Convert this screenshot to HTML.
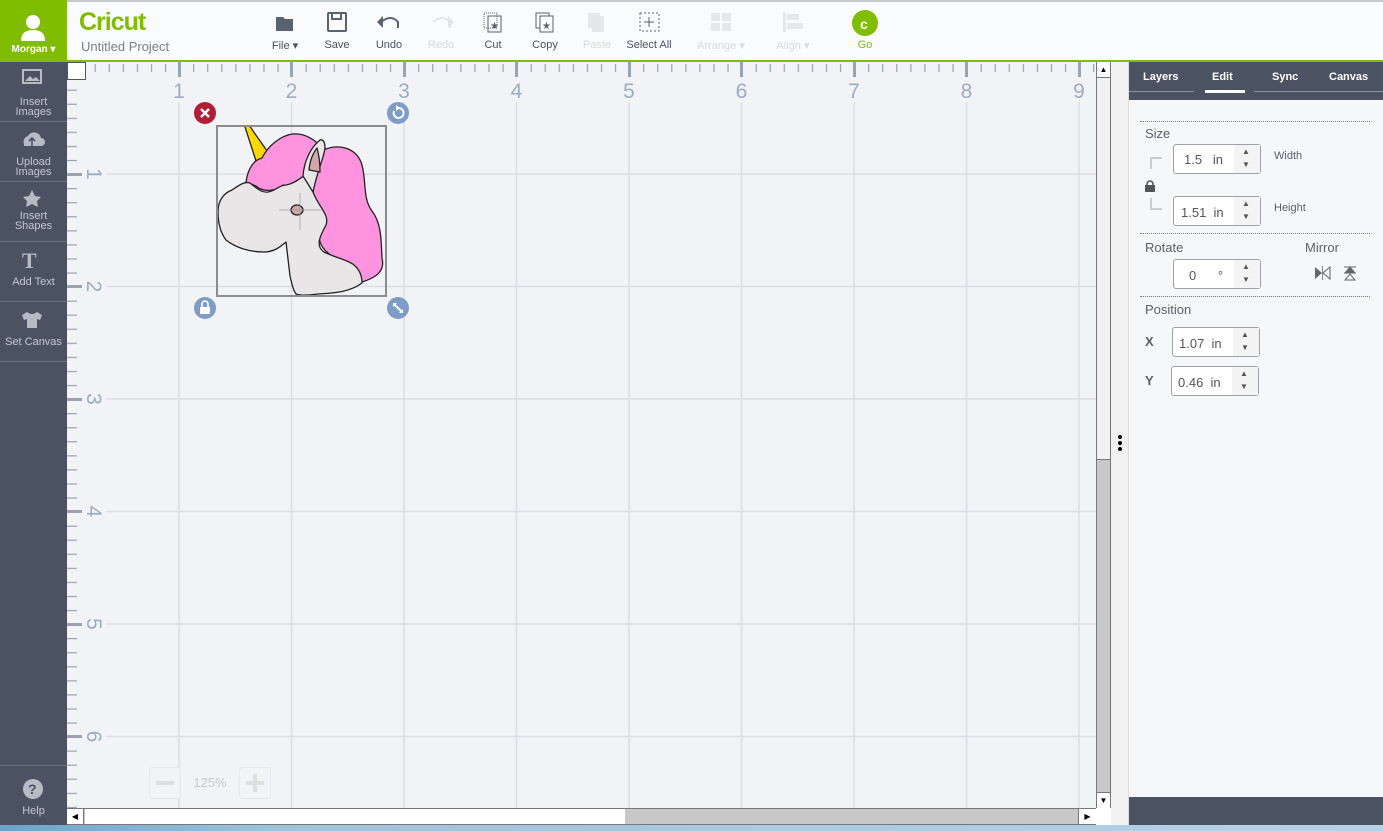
<!DOCTYPE html>
<html><head><meta charset="utf-8"><style>
*{margin:0;padding:0;box-sizing:border-box}
body{width:1383px;height:831px;overflow:hidden;position:relative;font-family:"Liberation Sans",sans-serif;background:#f2f3f7}
.abs{position:absolute}
#hdr{left:0;top:0;width:1383px;height:62px;background:#fafbfc;border-top:2px solid #c9c9c9;border-bottom:2px solid #80bc00}
#user{left:0;top:0;width:67px;height:62px;background:#80bc00}
#side{left:0;top:62px;width:67px;height:763px;background:#4b5261}
.si{position:absolute;left:0;width:67px;text-align:center;color:#c2c8d2;font-size:11px;line-height:10px}
.sep{position:absolute;left:0;width:67px;height:1px;background:#6a7180}
.tb{position:absolute;top:39px;width:70px;text-align:center;font-size:11px;color:#4b5261}
.tb.dis{color:#d8d9dc}
#rp{left:1129px;top:62px;width:254px;height:763px;background:#f6f7f9}
.lbl{position:absolute;font-size:13px;color:#5a5f68}
.inp{position:absolute;border:1px solid #9ea2a8;border-radius:3px;background:#fff;height:30px;font-size:13px;color:#555}
.inp .sp{position:absolute;right:0;top:0;width:26px;height:28px;background:#f4f4f4}
.dot{position:absolute;left:1140px;width:230px;border-top:1px dotted #777}
</style></head><body>
<div id="hdr" class="abs"></div>
<div id="user" class="abs">
<svg class="abs" style="left:20px;top:14px" width="26" height="28" viewBox="0 0 26 28"><circle cx="13" cy="8" r="7" fill="#fff"/><path d="M1 27 Q1 16 13 16 Q25 16 25 27 Z" fill="#fff"/></svg>
<div class="abs" style="left:0;top:44px;width:67px;text-align:center;color:#fff;font-size:10px;font-weight:bold">Morgan ▾</div>
</div>
<div class="abs" style="left:79px;top:8px;font-size:25px;font-weight:bold;color:#80bc00;letter-spacing:-1px">Cricut</div>
<div class="abs" style="left:81px;top:39px;font-size:13px;color:#7a7e85">Untitled Project</div>
<!-- toolbar -->
<svg class="abs" style="left:0;top:0" width="900" height="40">
<g fill="#5a6170"><path d="M276 17h7l2 2h8v12h-17z"/></g>
<g fill="none" stroke="#5a6170" stroke-width="2"><rect x="328" y="13" width="18" height="18" rx="1"/><rect x="332" y="13" width="9" height="6"/><path d="M381 22 q10-8 17 0 v6" /><path d="M433 22 q10-8 17 0 v6" stroke="#e3e4e6"/></g>
<path d="M377 22l6-6v12z" fill="#5a6170"/><path d="M454 22l-6-6v12z" fill="#e3e4e6"/>
<g fill="none" stroke="#5a6170" stroke-width="1"><rect x="484" y="13" width="13" height="15" stroke-dasharray="1 1"/><rect x="488" y="16" width="13" height="16"/><rect x="536" y="13" width="13" height="15"/><rect x="540" y="16" width="13" height="16" fill="#fafbfc"/><rect x="640" y="13" width="19" height="18" stroke-dasharray="2 2"/><path d="M649 17v10M644 22h10"/></g>
<g fill="#5a6170" font-size="10"><text x="490" y="29">★</text><text x="542" y="29">★</text></g>
<g fill="#e6e7e9"><rect x="588" y="13" width="12" height="15"/><rect x="592" y="16" width="12" height="16"/><rect x="711" y="13" width="9" height="8"/><rect x="722" y="13" width="9" height="8"/><rect x="711" y="23" width="9" height="8"/><rect x="722" y="23" width="9" height="8"/><rect x="783" y="12" width="3" height="20"/><rect x="787" y="14" width="12" height="6"/><rect x="787" y="23" width="16" height="6"/></g>
<circle cx="865" cy="23" r="13" fill="#80bc00"/><text x="860" y="29" fill="#fff" font-size="14" font-weight="bold">c</text>
</svg>
<div class="tb" style="left:250px">File ▾</div><div class="tb" style="left:302px">Save</div><div class="tb" style="left:354px">Undo</div><div class="tb dis" style="left:406px">Redo</div><div class="tb" style="left:458px">Cut</div><div class="tb" style="left:510px">Copy</div><div class="tb dis" style="left:562px">Paste</div><div class="tb" style="left:614px">Select All</div><div class="tb dis" style="left:686px">Arrange ▾</div><div class="tb dis" style="left:758px">Align ▾</div><div class="tb" style="left:830px;color:#80bc00">Go</div>
<!-- sidebar -->
<div id="side" class="abs">
<svg class="abs" style="left:0;top:0" width="67" height="300"><rect x="23" y="8" width="18" height="13" fill="none" stroke="#b6bcc6" stroke-width="2"/><path d="M25 19l5-5 3 3 3-2 4 4z" fill="#b6bcc6"/>
<path d="M24 82 a6 6 0 0 1 4-8 a7 7 0 0 1 13 2 a4 4 0 0 1 0 8h-17z" fill="#b6bcc6"/><path d="M32 84v-8M29 79l3-3 3 3" stroke="#4b5261" stroke-width="1.6" fill="none"/>
<path d="M32 128l3 6 6 1-4 4 1 6-6-3-6 3 1-6-4-4 6-1z" fill="#b6bcc6"/>
<text x="22" y="206" font-size="22" font-weight="bold" font-family="Liberation Serif" fill="#b6bcc6">T</text>
<path d="M27 250l-5 3 2 5 3-1v9h10v-9l3 1 2-5-5-3q-5 4-10 0z" fill="#b6bcc6"/></svg>
<div class="si" style="top:35px">Insert<br>Images</div><div class="sep" style="top:59px"></div>
<div class="si" style="top:95px">Upload<br>Images</div><div class="sep" style="top:119px"></div>
<div class="si" style="top:149px">Insert<br>Shapes</div><div class="sep" style="top:179px"></div>
<div class="si" style="top:215px">Add Text</div><div class="sep" style="top:239px"></div>
<div class="si" style="top:275px">Set Canvas</div><div class="sep" style="top:299px"></div>
<div class="sep" style="top:703px"></div>
<svg class="abs" style="left:22px;top:716px" width="22" height="22"><circle cx="11" cy="11" r="10" fill="#b6bcc6"/><text x="6" y="16" font-size="14" font-weight="bold" fill="#4b5261">?</text></svg>
<div class="si" style="top:744px">Help</div>
</div>
<!-- canvas -->
<svg class="abs" style="left:67px;top:62px" width="1029" height="746">
<defs>
<pattern id="mt" x="-0.5" y="0" width="14.0625" height="20" patternUnits="userSpaceOnUse"><rect x="0" y="2" width="1.2" height="8" fill="#9aa3b0"/></pattern>
<pattern id="ml" x="0" y="-0.5" width="20" height="14.0625" patternUnits="userSpaceOnUse"><rect x="0" y="0" width="10" height="1.2" fill="#9aa3b0"/></pattern>
</defs>
<rect width="1029" height="746" fill="#f2f3f7"/>
<rect x="18" y="0" width="1011" height="10" fill="url(#mt)"/>
<rect x="0" y="18" width="10" height="728" fill="url(#ml)"/>
<g stroke="#dcdde2" stroke-width="1.5">
<path d="M112 40V746M224.5 40V746M337 40V746M449.5 40V746M562 40V746M674.5 40V746M787 40V746M899.5 40V746M1012 40V746"/>
<path d="M40 112H1029M40 224.5H1029M40 337H1029M40 449.5H1029M40 562H1029M40 674.5H1029"/>
</g>
<g fill="#9aa3b0"><rect x="111" y="0" width="3" height="15"/><rect x="223" y="0" width="3" height="15"/><rect x="336" y="0" width="3" height="15"/><rect x="448" y="0" width="3" height="15"/><rect x="561" y="0" width="3" height="15"/><rect x="673" y="0" width="3" height="15"/><rect x="786" y="0" width="3" height="15"/><rect x="898" y="0" width="3" height="15"/><rect x="1011" y="0" width="3" height="15"/>
<rect x="0" y="111" width="15" height="3"/><rect x="0" y="223" width="15" height="3"/><rect x="0" y="336" width="15" height="3"/><rect x="0" y="448" width="15" height="3"/><rect x="0" y="561" width="15" height="3"/><rect x="0" y="673" width="15" height="3"/></g>
<g fill="#9eabc2" font-size="21" text-anchor="middle"><text x="112" y="36">1</text><text x="224.5" y="36">2</text><text x="337" y="36">3</text><text x="449.5" y="36">4</text><text x="562" y="36">5</text><text x="674.5" y="36">6</text><text x="787" y="36">7</text><text x="899.5" y="36">8</text><text x="1012" y="36">9</text>
<g transform="rotate(90)"><text x="112" y="-20">1</text><text x="224.5" y="-20">2</text><text x="337" y="-20">3</text><text x="449.5" y="-20">4</text><text x="562" y="-20">5</text><text x="674.5" y="-20">6</text></g></g>
<rect x="0.5" y="0.5" width="18" height="17" fill="#fff" stroke="#555"/>
<!-- zoom -->
<g opacity="0.9"><rect x="82.5" y="705.5" width="31" height="31" rx="3" fill="#f2f3f7" stroke="#e6e7ea"/><rect x="172.5" y="705.5" width="31" height="31" rx="3" fill="#f2f3f7" stroke="#e6e7ea"/><rect x="89" y="719" width="18" height="4" fill="#dcdcdc"/><rect x="179" y="719" width="18" height="4" fill="#dcdcdc"/><rect x="186" y="712" width="4" height="18" fill="#dcdcdc"/></g>
<text x="143" y="725" font-size="13" fill="#c8c8c8" text-anchor="middle">125%</text>
<!-- unicorn in page coords -->
<g transform="translate(-67,-62)" stroke="#222" stroke-width="1.3" stroke-linejoin="round">
<path d="M245 127 C248 124 251 127 253 131 L272 158 C266 162 262 163 257 164 Z" fill="#ffd800"/>
<path d="M246 182 C248 168 254 160 262 158 C268 146 280 136 292 134 C302 133 310 137 316 142 L326 149 C340 144 355 148 361 162 C367 178 362 198 372 211 C382 224 381 242 382 258 C385 270 378 277 362 282 L346 262 C330 258 316 246 320 232 C326 218 318 206 313 192 C300 185 290 186 283 185 C276 192 262 192 256 186 Z" fill="#ff93e0"/>
<path d="M218 212 C218 200 224 193 232 190 C238 186 244 181 250 183 C256 188 262 193 268 192 C276 191 279 185 286 185 C294 184 300 178 304 176 L313 192 C318 206 330 215 326 225 C320 236 315 246 324 252 C336 258 348 260 354 265 C360 270 362 276 362 283 C350 292 335 293 318 294 C310 295 300 296 296 294 C293 290 292 284 290 276 L286 242 C280 247 274 252 264 252 C250 252 236 248 226 240 C220 232 218 222 218 212 Z" fill="#e8e6e6"/>
<path d="M303 176 C304 162 310 148 320 140 C323 139 325 142 325 148 C324 158 318 168 313 192 Z" fill="#e8e6e6"/>
<path d="M309 170 C310 160 313 153 317 148 C319 155 320 164 320 172 Z" fill="#d4a7a9"/>
<ellipse cx="297" cy="210" rx="6" ry="5" fill="#d4a7a9"/>
</g>
<g transform="translate(-67,-62)">
<path d="M279 210h42M300 193v37" stroke="#999" stroke-width="1" opacity="0.7"/>
<rect x="217" y="126" width="169" height="170" fill="none" stroke="#8c8c8c" stroke-width="2"/>
<circle cx="205" cy="113" r="11" fill="#b11f36"/><path d="M201 109l8 8M209 109l-8 8" stroke="#fff" stroke-width="2.5"/>
<circle cx="398" cy="113" r="11" fill="#7d9dc6"/><path d="M394 111 a5 5 0 1 0 4 -3" stroke="#fff" stroke-width="2" fill="none"/><path d="M396 105l4 3-4 3z" fill="#fff"/>
<circle cx="205" cy="308" r="11" fill="#7d9dc6"/><rect x="200" y="307" width="10" height="7" fill="#fff"/><path d="M202 307v-3a3 3 0 0 1 6 0v3" stroke="#fff" stroke-width="1.6" fill="none"/>
<circle cx="398" cy="308" r="11" fill="#7d9dc6"/><path d="M394 304l8 8" stroke="#fff" stroke-width="2"/><path d="M393 303h4l-4 4zM403 313h-4l4-4z" fill="#fff"/>
</g>
</svg>
<!-- scrollbars -->
<div class="abs" style="left:1096px;top:62px;width:15px;height:746px;background:#c8c8c8;border-left:1px solid #777;border-right:1px solid #777"></div>
<div class="abs" style="left:1097px;top:62px;width:13px;height:398px;background:#f1f1f1;border-bottom:1px solid #777"></div>
<div class="abs" style="left:1097px;top:62px;width:13px;height:16px;background:#fff;border-bottom:1px solid #777;font-size:8px;text-align:center;line-height:16px">▲</div>
<div class="abs" style="left:1097px;top:792px;width:13px;height:16px;background:#fff;border-top:1px solid #777;font-size:8px;text-align:center;line-height:16px">▼</div>
<div class="abs" style="left:67px;top:808px;width:1029px;height:17px;background:#c8c8c8;border-top:1px solid #777;border-bottom:1px solid #777"></div>
<div class="abs" style="left:85px;top:809px;width:540px;height:15px;background:#fff"></div>
<div class="abs" style="left:67px;top:809px;width:17px;height:15px;background:#fff;border-right:1px solid #777;font-size:8px;text-align:center;line-height:15px">◀</div>
<div class="abs" style="left:1078px;top:809px;width:18px;height:15px;background:#fff;border-left:1px solid #777;font-size:8px;text-align:center;line-height:15px">▶</div>
<div class="abs" style="left:1096px;top:808px;width:15px;height:17px;background:#fff"></div>
<div class="abs" style="left:1111px;top:62px;width:18px;height:763px;background:#f1f1f1;border-right:1px solid #ddd"></div>
<svg class="abs" style="left:1117px;top:435px" width="8" height="18"><circle cx="3" cy="2" r="2"/><circle cx="3" cy="8" r="2"/><circle cx="3" cy="14" r="2"/></svg>
<div class="abs" style="left:0;top:825px;width:1383px;height:6px;background:linear-gradient(90deg,#6ba4c8,#9fc3db 20%,#b6d2e6)"></div>
<!-- right panel -->
<div id="rp" class="abs">
<div class="abs" style="left:0;top:0;width:254px;height:38px;background:#4b5261"></div>
<div class="abs" style="left:0;top:29px;width:65px;height:1px;background:#8a909c"></div>
<div class="abs" style="left:125px;top:29px;width:129px;height:1px;background:#8a909c"></div>
<div class="abs" style="left:76px;top:28px;width:40px;height:3px;background:#fff"></div>
<div class="abs" style="left:0;top:9px;width:254px;color:#fff;font-size:11px;font-weight:bold">
<span class="abs" style="left:14px">Layers</span><span class="abs" style="left:83px">Edit</span><span class="abs" style="left:143px">Sync</span><span class="abs" style="left:200px">Canvas</span></div>
<div class="abs" style="left:0;top:735px;width:254px;height:28px;background:#4b5261"></div>
</div>
<div class="dot" style="top:121px"></div><div class="dot" style="top:233px"></div><div class="dot" style="top:296px"></div>
<div class="lbl" style="left:1145px;top:126px">Size</div>
<div class="lbl" style="left:1145px;top:240px">Rotate</div>
<div class="lbl" style="left:1305px;top:240px">Mirror</div>
<div class="lbl" style="left:1145px;top:302px">Position</div>
<div class="lbl" style="left:1274px;top:150px;font-size:11px">Width</div>
<div class="lbl" style="left:1274px;top:202px;font-size:11px">Height</div>
<div class="lbl" style="left:1145px;top:334px;font-weight:bold">X</div>
<div class="lbl" style="left:1145px;top:373px;font-weight:bold">Y</div>
<div class="abs" style="left:1150px;top:157px;width:12px;height:12px;border-left:2px solid #ccc;border-top:2px solid #ccc"></div>
<div class="abs" style="left:1150px;top:198px;width:12px;height:12px;border-left:2px solid #ccc;border-bottom:2px solid #ccc"></div>
<svg class="abs" style="left:1144px;top:180px" width="12" height="12"><rect x="1" y="5" width="10" height="7" fill="#555"/><path d="M3 6V4a3 3 0 0 1 6 0v2" stroke="#555" stroke-width="1.6" fill="none"/></svg>
<svg class="abs" style="left:1313px;top:265px" width="50" height="16"><path d="M2 2l7 6-7 6z" fill="#666"/><path d="M9.5 1v14" stroke="#888"/><path d="M17 2l-7 6 7 6z" fill="none" stroke="#666"/><path d="M31 2h12M37 2l-5 6h10z" fill="#666" stroke="#666"/><path d="M31 8h12M37 9l-5 6h10z" fill="none" stroke="#666"/></svg>
<div class="inp" style="left:1173px;top:144px;width:88px"><span class="abs" style="left:10px;top:7px">1.5 &nbsp; in</span><div class="sp"><span class="abs" style="left:8px;top:2px;font-size:8px">▲</span><span class="abs" style="left:8px;top:15px;font-size:8px">▼</span></div></div>
<div class="inp" style="left:1173px;top:196px;width:88px"><span class="abs" style="left:7px;top:8px">1.51 &nbsp;in</span><div class="sp"><span class="abs" style="left:8px;top:2px;font-size:8px">▲</span><span class="abs" style="left:8px;top:15px;font-size:8px">▼</span></div></div>
<div class="inp" style="left:1173px;top:259px;width:88px"><span class="abs" style="left:15px;top:8px">0 &nbsp; &nbsp; &nbsp;°</span><div class="sp"><span class="abs" style="left:8px;top:2px;font-size:8px">▲</span><span class="abs" style="left:8px;top:15px;font-size:8px">▼</span></div></div>
<div class="inp" style="left:1172px;top:327px;width:88px"><span class="abs" style="left:6px;top:8px">1.07 &nbsp;in</span><div class="sp"><span class="abs" style="left:8px;top:2px;font-size:8px">▲</span><span class="abs" style="left:8px;top:15px;font-size:8px">▼</span></div></div>
<div class="inp" style="left:1171px;top:366px;width:88px"><span class="abs" style="left:6px;top:8px">0.46 &nbsp;in</span><div class="sp"><span class="abs" style="left:8px;top:2px;font-size:8px">▲</span><span class="abs" style="left:8px;top:15px;font-size:8px">▼</span></div></div>
</body></html>
